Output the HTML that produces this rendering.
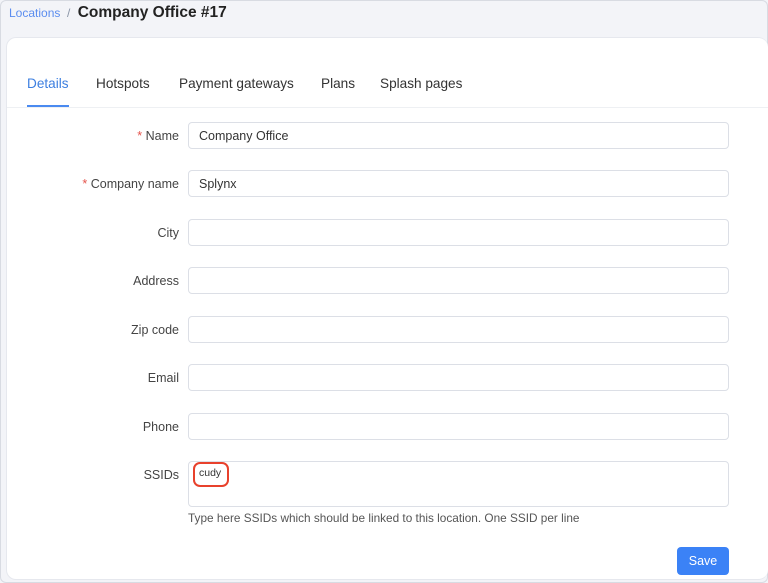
<!DOCTYPE html>
<html><head><meta charset="utf-8"><style>
*{box-sizing:border-box;margin:0;padding:0}
body{width:768px;height:583px;background:#f3f4f8;font-family:"Liberation Sans",sans-serif;position:relative;overflow:hidden}
.frame{position:absolute;left:0;top:0;width:768px;height:583px;border:1px solid #d8dbe2;border-radius:6px}
.bc{position:absolute;left:9px;top:4px;font-size:12px;color:#8a94a6}
.bc a{color:#5b8def}
.bc b{font-size:15.5px;color:#222;font-weight:bold;margin-left:4px}
.card{position:absolute;left:6px;top:37px;width:762px;height:543px;background:#fff;border-radius:10px;border:1px solid #e6e8ee;border-right:none}
.tabs{position:absolute;left:0;top:0;width:100%;height:70px;border-bottom:1px solid #eef0f3}
.tab{position:absolute;top:38px;font-size:13.6px;color:#333}
.tab.act{color:#3d7fe0}
.ul{position:absolute;left:20px;top:67px;width:42px;height:2px;background:#4a8af0}
.row{position:absolute;left:0;width:100%}
.lab{position:absolute;right:589px;font-size:12.5px;color:#444;top:7px;white-space:nowrap}
.lab i{color:#e5534b;font-style:normal}
.inp{position:absolute;left:181px;width:541px;height:27px;border:1px solid #dcdfe6;border-radius:4px;font-size:12.5px;color:#333;padding:6px 10px}
.help{position:absolute;left:181px;top:473px;font-size:11.8px;color:#555}
.save{position:absolute;left:670px;top:509px;width:52px;height:28px;background:#3b82f6;border-radius:4px;color:#fff;font-size:12.5px;text-align:center;line-height:28px}
.cudy{position:absolute;left:4px;top:0px;width:36px;height:25px;border:2px solid #e8412c;border-radius:7px;font-size:10.5px;padding:3px 4px;color:#333}
</style></head><body>
<div class="frame"></div>
<div class="bc"><a>Locations</a> &nbsp;/ <b>Company Office #17</b></div>
<div class="card">
<div class="tabs">
<span class="tab act" style="left:20px">Details</span>
<span class="tab" style="left:89px">Hotspots</span>
<span class="tab" style="left:172px">Payment gateways</span>
<span class="tab" style="left:314px">Plans</span>
<span class="tab" style="left:373px">Splash pages</span>
<div class="ul"></div>
</div>
<div class="row" style="top:84px"><span class="lab"><i>*</i> Name</span><div class="inp">Company Office</div></div>
<div class="row" style="top:132px"><span class="lab"><i>*</i> Company name</span><div class="inp">Splynx</div></div>
<div class="row" style="top:181px"><span class="lab">City</span><div class="inp"></div></div>
<div class="row" style="top:229px"><span class="lab">Address</span><div class="inp"></div></div>
<div class="row" style="top:278px"><span class="lab">Zip code</span><div class="inp"></div></div>
<div class="row" style="top:326px"><span class="lab">Email</span><div class="inp"></div></div>
<div class="row" style="top:375px"><span class="lab">Phone</span><div class="inp"></div></div>
<div class="row" style="top:423px"><span class="lab">SSIDs</span><div class="inp" style="height:46px;padding:0"><div class="cudy">cudy</div></div></div>
<div class="help">Type here SSIDs which should be linked to this location. One SSID per line</div>
<div class="save">Save</div>
</div>
</body></html>
